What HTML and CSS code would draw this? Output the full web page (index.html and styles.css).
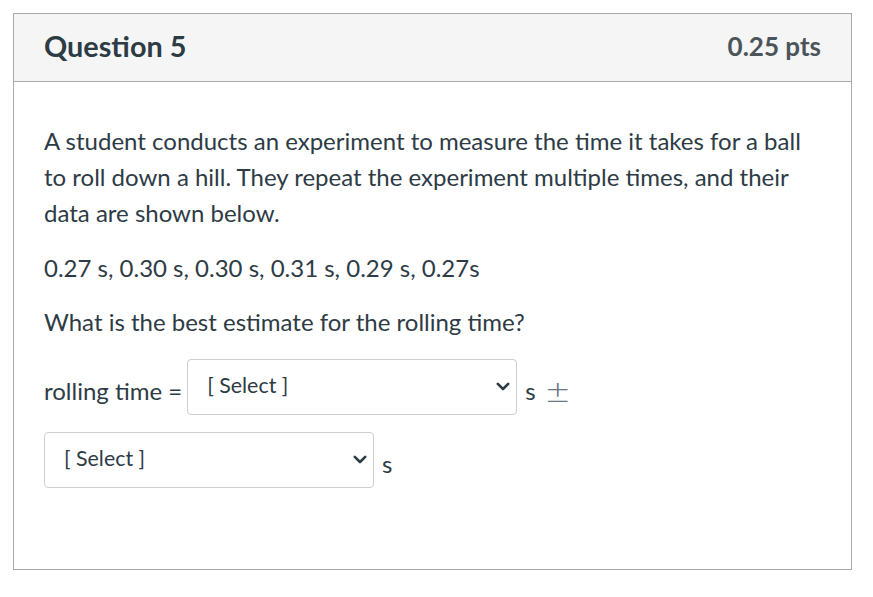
FILE: index.html
```
<!DOCTYPE html>
<html>
<head>
<meta charset="utf-8">
<link rel="stylesheet" href="styles.css">
</head>
<body>
<div class="question">
  <div class="header">
    <h2 class="title">Question 5</h2>
    <div class="pts">0.25 pts</div>
  </div>
  <div class="content">
    <p>A student conducts an experiment to measure the time it takes for a ball to roll down a hill. They repeat the experiment multiple times, and their data are shown below.</p>
    <p>0.27 s, 0.30 s, 0.30 s, 0.31 s, 0.29 s, 0.27s</p>
    <p>What is the best estimate for the rolling time?</p>
    <div class="row row1">
      <span class="label">rolling time =</span>
      <div class="select">
        <span class="sel-text">[ Select ]</span>
        <svg class="chev" width="14" height="9" viewBox="0 0 14 9"><path d="M1.8 1.8 L7 7 L12.2 1.8" fill="none" stroke="#2d3b45" stroke-width="2.6" stroke-linecap="round" stroke-linejoin="round"/></svg>
      </div>
      <span class="label unit">s</span>
      <span class="label pm">±</span>
    </div>
    <div class="row row2">
      <div class="select">
        <span class="sel-text">[ Select ]</span>
        <svg class="chev" width="14" height="9" viewBox="0 0 14 9"><path d="M1.8 1.8 L7 7 L12.2 1.8" fill="none" stroke="#2d3b45" stroke-width="2.6" stroke-linecap="round" stroke-linejoin="round"/></svg>
      </div>
      <span class="label unit">s</span>
    </div>
  </div>
</div>
</body>
</html>
```
FILE: styles.css
```
html, body {
  margin: 0;
  padding: 0;
  background: #ffffff;
}
body {
  padding: 13px 0 0 13px;
  font-family: Lato, "Open Sans", sans-serif;
  color: #2d3b45;
}
.question {
  width: 837px;
  border: 1px solid #a9a9a9;
  background: #fff;
}
.header {
  display: flex;
  justify-content: space-between;
  align-items: center;
  box-sizing: border-box;
  padding: 0 30px 4px 30px;
  background: #f5f5f5;
  border-bottom: 1px solid #a9a9a9;
  height: 68px;
}
.title {
  margin: 0;
  font-size: 28.8px;
  font-weight: 700;
  color: #2d3b45;
}
.pts {
  font-size: 26px;
  font-weight: 700;
  color: #4d5459;
}
.content {
  padding: 41px 30px 81px 30px;
  font-size: 24px;
  line-height: 36px;
}
.content p {
  margin: 0 0 18.5px 0;
}
.row {
  display: flex;
  align-items: center;
}
.row1 {
  margin-top: 1px;
}
.row2 {
  margin-top: 17px;
}
.label {
  padding-top: 8.4px;
  white-space: pre;
}
.row1 .label:first-child {
  margin-right: 5px;
}
.select {
  box-sizing: border-box;
  width: 330px;
  height: 56px;
  border: 1px solid #cfcfcf;
  border-radius: 4px;
  display: flex;
  align-items: center;
  justify-content: space-between;
  padding: 0 6px 0 19px;
  font-size: 21.4px;
  background: #fff;
}
.sel-text {
  margin-top: -4px;
}
.chev {
  margin-top: -1px;
}
.unit {
  margin-left: 8px;
}
.pm {
  margin-left: 9px;
  font-family: "DejaVu Sans", sans-serif;
  font-weight: 300;
  font-size: 31px;
  line-height: 36px;
  color: #6b7780;
}
```
